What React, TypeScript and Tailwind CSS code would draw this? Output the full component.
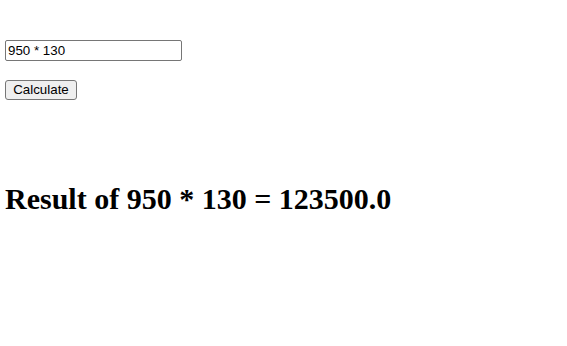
import { useState } from "react";

const App = () => {
  const [expr, setExpr] = useState("950 * 130");

  return (
    <div className="min-h-screen bg-white pl-[5px] pt-[40px] text-black">
      <div className="flex flex-col items-start">
        <input
          type="text"
          value={expr}
          onChange={(e) => setExpr(e.target.value)}
          className="box-border h-[21px] w-[177px] rounded-[2px] border border-[#767676] bg-white px-[2px] py-[1px] font-['Liberation_Sans',Arial,sans-serif] text-[13.33px] leading-[17px] text-black outline-none"
        />
        <button
          type="button"
          className="mt-[19px] box-border h-[20px] w-[72px] rounded-[3px] border border-[#767676] bg-[#efefef] px-[6px] py-0 font-['Liberation_Sans',Arial,sans-serif] text-[13.33px] leading-[16px] text-black"
        >
          Calculate
        </button>
      </div>
      <h1 className="mt-[82px] font-['Liberation_Serif','Times_New_Roman',serif] text-[30px] font-bold leading-[34px]">
        Result of 950 * 130 = 123500.0
      </h1>
    </div>
  );
};

export default App;
